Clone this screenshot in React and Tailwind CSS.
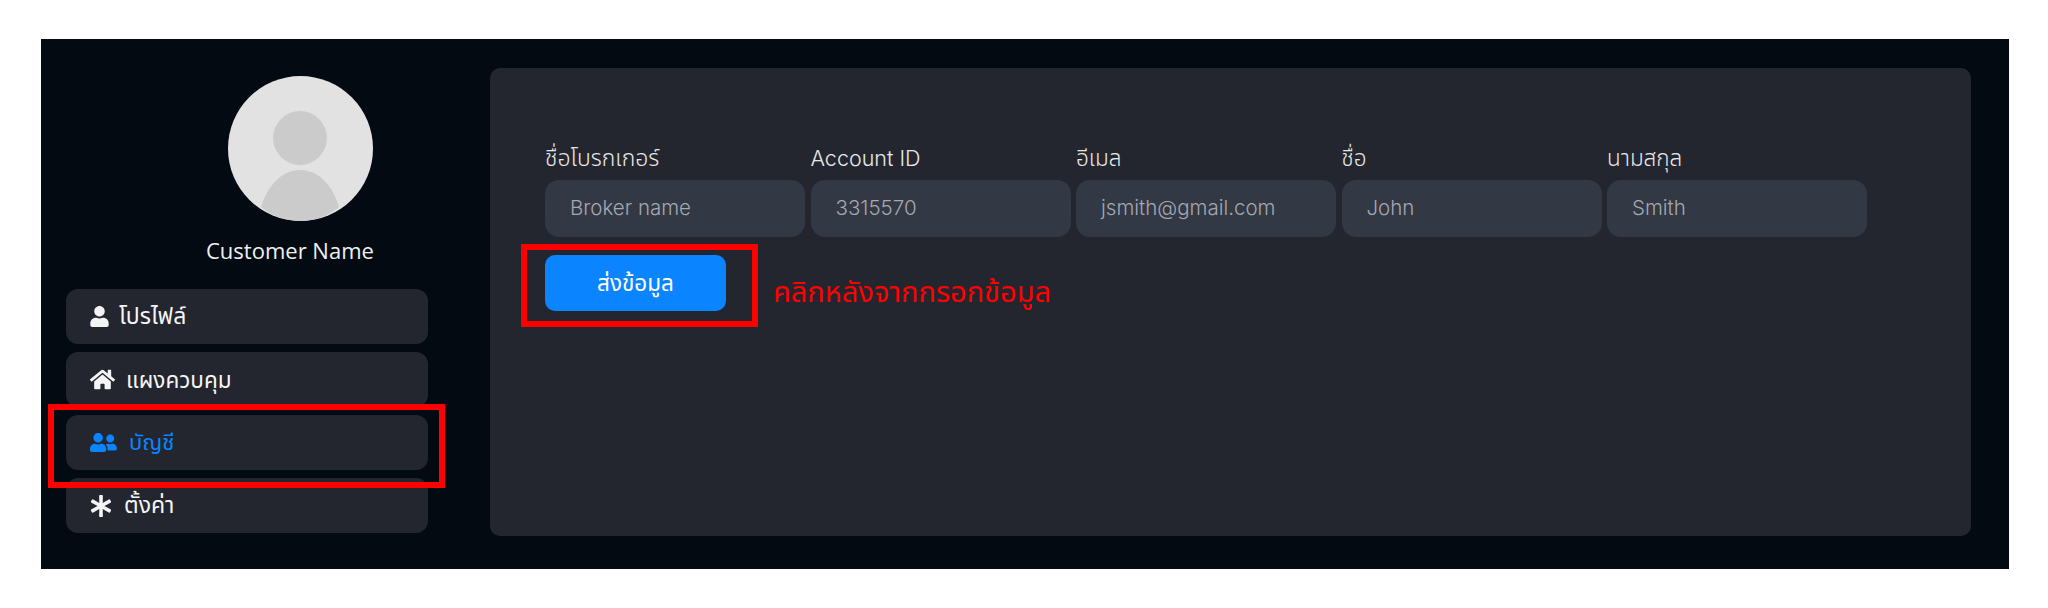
import React from "react";
import { FaUser, FaHome, FaUserFriends, FaAsterisk } from "react-icons/fa";

const font = "font-['Inter','Noto_Sans_Thai','Noto_Sans',sans-serif]";

const nav = [
  { label: "โปรไฟล์", Icon: FaUser, size: "text-[21px] -ml-[1.5px]", gap: "gap-[9.5px]", text: "text-[23px]" },
  { label: "แผงควบคุม", Icon: FaHome, size: "text-[25px]", gap: "gap-[11px]", text: "text-[22.5px]" },
  { label: "บัญชี", Icon: FaUserFriends, size: "text-[27px]", gap: "gap-[12px]", text: "text-[22px]", active: true },
  { label: "ตั้งค่า", Icon: FaAsterisk, size: "text-[22px]", gap: "gap-[12px]", text: "text-[23px]" },
];

const fields = [
  { label: "ชื่อโบรกเกอร์", value: "Broker name", labelSize: "text-[23px]" },
  { label: "Account ID", value: "3315570", labelSize: "text-[21.5px]" },
  { label: "อีเมล", value: "jsmith@gmail.com", labelSize: "text-[22.5px]" },
  { label: "ชื่อ", value: "John", labelSize: "text-[22.5px]" },
  { label: "นามสกุล", value: "Smith", labelSize: "text-[22.5px]" },
];

function Avatar() {
  return (
    <svg viewBox="0 0 145 145" className="w-[145px] h-[145px] block">
      <circle cx="72.5" cy="72.5" r="72.5" fill="#e2e2e2" />
      <circle cx="72" cy="62" r="27" fill="#cbcbcb" />
      <path d="M33 131 C40 108 55 94 72 94 C90 94 104 108 111 131 C100 140 87 145 72.5 145 C58 145 44 140 33 131 Z" fill="#cbcbcb" />
    </svg>
  );
}

export default function App() {
  return (
    <div className={`${font} w-[2048px] h-[608px] bg-white pt-[39px] pl-[41px] overflow-hidden`}>
      <div className="relative w-[1968px] h-[530px] bg-[#030a12] flex">
        <aside className="w-[449px] pl-[25px] pt-[37px] shrink-0">
          <div className="ml-[162px]">
            <Avatar />
          </div>
          <div className="ml-[140px] mt-[14px] font-['Open_Sans',sans-serif] text-[22px] leading-[30px] text-[#f0f0f0] whitespace-nowrap">Customer Name</div>
          <nav className="mt-[24px] w-[362px] flex flex-col gap-[8px]">
            {nav.map(({ label, Icon, size, gap, text, active }) => (
              <div key={label} className={`h-[55px] rounded-[12px] bg-[#23262e] pl-[24px] flex items-center ${gap} ${text} ${active ? "text-[#0a84ff]" : "text-[#f4f4f4]"}`}>
                <Icon className={size} />
                <span>{label}</span>
              </div>
            ))}
          </nav>
        </aside>
        <main className="w-[1481px] h-[468px] mt-[29px] rounded-[10px] bg-[#23262e] pl-[55px] pt-[75px]">
          <div className="flex gap-[5.5px]">
            {fields.map((f) => (
              <div key={f.label} className="w-[260px]">
                <div className={`${f.labelSize} font-light leading-[30px] text-[#e8e8e8] mb-[7px]`}>{f.label}</div>
                <div className="h-[57px] rounded-[14px] bg-[#323844] pl-[25px] flex items-center text-[20.5px] font-light text-[#a4a8b0]">{f.value}</div>
              </div>
            ))}
          </div>
          <div className="flex items-center mt-[16.5px]">
            <button className="w-[181px] h-[56px] rounded-[10px] bg-[#0a84ff] text-white text-[22.5px]">ส่งข้อมูล</button>
            <span className="ml-[47px] mt-[16px] text-[29px] text-[#ff0000] whitespace-nowrap">คลิกหลังจากกรอกข้อมูล</span>
          </div>
        </main>
        <div className="absolute left-[7px] top-[365px] w-[397px] h-[84px] border-[6px] border-[#ff0000]" />
        <div className="absolute left-[480px] top-[205px] w-[237px] h-[83px] border-[6px] border-[#ff0000]" />
      </div>
    </div>
  );
}
